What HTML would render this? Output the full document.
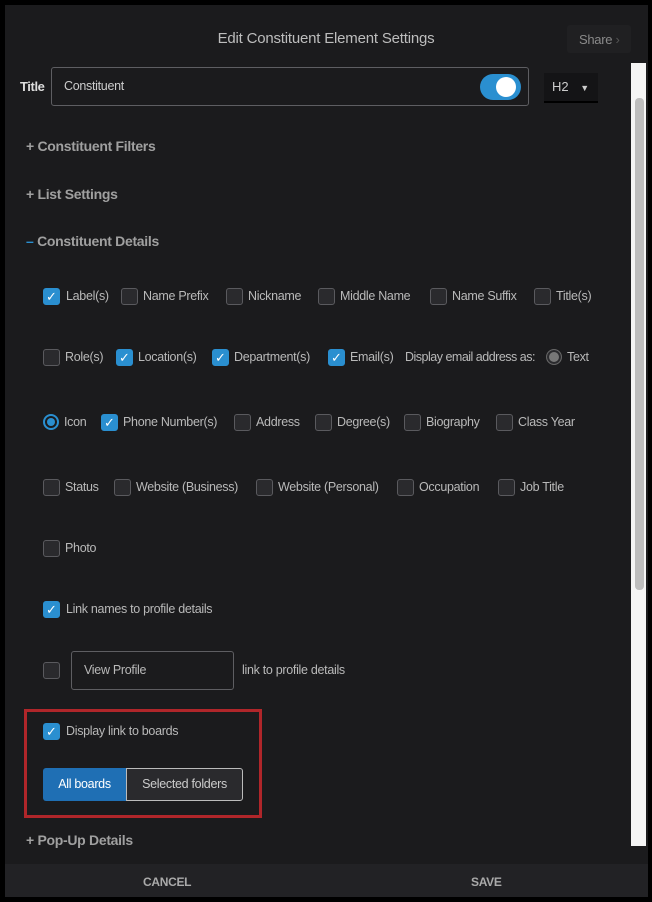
<!DOCTYPE html><html><head><style>
*{box-sizing:border-box;margin:0;padding:0}
body{width:652px;height:902px;background:#000;font-family:"Liberation Sans",sans-serif;position:relative;overflow:hidden;color:#bdbdbd}
.p{position:absolute;left:5px;top:5px;width:643px;height:892px;background:#1b1b1d}
.a{position:absolute;white-space:nowrap}
.t{font-size:12.5px;line-height:16px;color:#b9b9b9;letter-spacing:-0.3px}
.cb{position:absolute;width:17px;height:17px;border:1px solid #5a5a5e;border-radius:3px;background:#2a2a2d}
.cb.c{background:#2a8fd0;border-color:#2a8fd0;color:#fff;font-size:13px;line-height:15px;text-align:center}
.rd{position:absolute;width:16px;height:16px;border-radius:50%;border:2px solid #2a8fd0;background:#1b1b1d}
.rd::after{content:"";position:absolute;left:2px;top:2px;width:8px;height:8px;border-radius:50%;background:#2a8fd0}
.h{font-size:14px;color:#a0a0a0;font-weight:bold;letter-spacing:-0.3px}
</style></head><body>
<div class="p"></div>
<div class="a" style="left:0;top:30px;width:652px;text-align:center;font-size:15px;color:#bdbdbd;letter-spacing:-0.2px">Edit Constituent Element Settings</div>
<div class="a" style="left:567px;top:25px;width:64px;height:28px;background:#202022;border-radius:3px;font-size:13px;color:#8a8a8a;padding:7px 0 0 12px;letter-spacing:-0.3px">Share <span style="color:#555">›</span></div>
<div class="a" style="left:631px;top:63px;width:15px;height:783px;background:#f4f4f4"></div>
<div class="a" style="left:635px;top:98px;width:9px;height:492px;background:#bdbdbd;border-radius:4px"></div>
<div class="a" style="left:20px;top:79px;font-size:13px;font-weight:bold;color:#ddd;letter-spacing:-0.4px">Title</div>
<div class="a" style="left:51px;top:67px;width:478px;height:39px;border:1px solid #5e5e62;border-radius:3px"></div>
<div class="a t" style="left:64px;top:78px;color:#ccc">Constituent</div>
<div class="a" style="left:480px;top:74px;width:41px;height:26px;border-radius:13px;background:#2a8fd0"></div>
<div class="a" style="left:496px;top:77px;width:20px;height:20px;border-radius:50%;background:#fff"></div>
<div class="a" style="left:544px;top:73px;width:54px;height:30px;background:#141416;border-bottom:2px solid #000;font-size:13px;color:#ccc;padding:6px 0 0 8px">H2 <span style="font-size:9px;margin-left:8px">▼</span></div>
<div class="a h" style="left:26px;top:138px">+ Constituent Filters</div>
<div class="a h" style="left:26px;top:186px">+ List Settings</div>
<div class="a h" style="left:26px;top:233px"><span style="color:#2a8fd0">–</span> Constituent Details</div>
<!-- row1 -->
<div class="cb c" style="left:43px;top:288px">✓</div><div class="a t" style="left:66px;top:288px">Label(s)</div>
<div class="cb" style="left:121px;top:288px"></div><div class="a t" style="left:143px;top:288px">Name Prefix</div>
<div class="cb" style="left:226px;top:288px"></div><div class="a t" style="left:248px;top:288px">Nickname</div>
<div class="cb" style="left:318px;top:288px"></div><div class="a t" style="left:340px;top:288px">Middle Name</div>
<div class="cb" style="left:430px;top:288px"></div><div class="a t" style="left:452px;top:288px">Name Suffix</div>
<div class="cb" style="left:534px;top:288px"></div><div class="a t" style="left:556px;top:288px">Title(s)</div>
<!-- row2 -->
<div class="cb" style="left:43px;top:349px"></div><div class="a t" style="left:65px;top:349px">Role(s)</div>
<div class="cb c" style="left:116px;top:349px">✓</div><div class="a t" style="left:138px;top:349px">Location(s)</div>
<div class="cb c" style="left:212px;top:349px">✓</div><div class="a t" style="left:234px;top:349px">Department(s)</div>
<div class="cb c" style="left:328px;top:349px">✓</div><div class="a t" style="left:350px;top:349px">Email(s)</div>
<div class="a t" style="left:405px;top:349px;letter-spacing:-0.5px">Display email address as:</div>
<div class="a" style="left:546px;top:349px;width:16px;height:16px;border-radius:50%;border:1px solid #666;background:#777;box-shadow:inset 0 0 0 2px #2a2a2d"></div>
<div class="a t" style="left:567px;top:349px">Text</div>
<!-- row3 -->
<div class="rd" style="left:43px;top:414px"></div><div class="a t" style="left:64px;top:414px">Icon</div>
<div class="cb c" style="left:101px;top:414px">✓</div><div class="a t" style="left:123px;top:414px">Phone Number(s)</div>
<div class="cb" style="left:234px;top:414px"></div><div class="a t" style="left:256px;top:414px">Address</div>
<div class="cb" style="left:315px;top:414px"></div><div class="a t" style="left:337px;top:414px">Degree(s)</div>
<div class="cb" style="left:404px;top:414px"></div><div class="a t" style="left:426px;top:414px">Biography</div>
<div class="cb" style="left:496px;top:414px"></div><div class="a t" style="left:518px;top:414px">Class Year</div>
<!-- row4 -->
<div class="cb" style="left:43px;top:479px"></div><div class="a t" style="left:65px;top:479px">Status</div>
<div class="cb" style="left:114px;top:479px"></div><div class="a t" style="left:136px;top:479px">Website (Business)</div>
<div class="cb" style="left:256px;top:479px"></div><div class="a t" style="left:278px;top:479px">Website (Personal)</div>
<div class="cb" style="left:397px;top:479px"></div><div class="a t" style="left:419px;top:479px">Occupation</div>
<div class="cb" style="left:498px;top:479px"></div><div class="a t" style="left:520px;top:479px">Job Title</div>
<div class="cb" style="left:43px;top:540px"></div><div class="a t" style="left:65px;top:540px">Photo</div>
<div class="cb c" style="left:43px;top:601px">✓</div><div class="a t" style="left:66px;top:601px">Link names to profile details</div>
<div class="cb" style="left:43px;top:662px"></div>
<div class="a" style="left:71px;top:651px;width:163px;height:39px;border:1px solid #5e5e62;border-radius:3px"></div>
<div class="a t" style="left:84px;top:662px">View Profile</div>
<div class="a t" style="left:242px;top:662px">link to profile details</div>
<div class="a" style="left:24px;top:709px;width:238px;height:109px;border:3px solid #b0262a"></div>
<div class="cb c" style="left:43px;top:723px">✓</div><div class="a t" style="left:66px;top:723px">Display link to boards</div>
<div class="a" style="left:43px;top:768px;width:83px;height:33px;background:#1f6fb4;border-radius:3px 0 0 3px;color:#fff;font-size:12.5px;letter-spacing:-0.3px;text-align:center;line-height:33px">All boards</div>
<div class="a" style="left:126px;top:768px;width:117px;height:33px;background:#2a2a2d;border:1px solid #bbb;border-radius:0 3px 3px 0;color:#ccc;font-size:12.5px;letter-spacing:-0.3px;text-align:center;line-height:31px">Selected folders</div>
<div class="a" style="left:5px;top:826px;width:620px;height:22px;overflow:hidden"><div class="h" style="position:absolute;left:21px;top:6px">+ Pop-Up Details</div></div>
<div class="a" style="left:5px;top:864px;width:643px;height:33px;background:#222225"></div>
<div class="a" style="left:143px;top:875px;font-size:12px;font-weight:bold;color:#aaa;letter-spacing:-0.3px">CANCEL</div>
<div class="a" style="left:471px;top:875px;font-size:12px;font-weight:bold;color:#aaa;letter-spacing:-0.3px">SAVE</div>
</body></html>
